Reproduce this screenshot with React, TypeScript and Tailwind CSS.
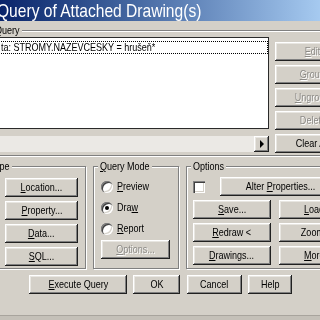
import clsx from 'clsx';
import type { ReactNode } from 'react';

const face = "font-['Liberation_Sans',Arial,sans-serif]";
const raised =
  'shadow-[inset_-1px_-1px_0_#202020,inset_1px_1px_0_#ffffff,inset_-2px_-2px_0_#808080,inset_2px_2px_0_#e8e6e1]';
const sunken =
  'shadow-[inset_1px_1px_0_#808080,inset_2px_2px_0_#404040,inset_-1px_-1px_0_#ffffff,inset_-2px_-2px_0_#d4d0c8]';
const etched = 'border border-[#808080] shadow-[1px_1px_0_#ffffff,inset_1px_1px_0_#ffffff]';

// the dialog font is narrower than Arial, so squeeze the glyphs
function N({ children, left }: { children: ReactNode; left?: boolean }) {
  return (
    <span className={clsx('inline-block whitespace-nowrap scale-x-[0.82]', left && 'origin-left')}>{children}</span>
  );
}

function U({ c }: { c: string }) {
  return <span className="underline underline-offset-[1px]">{c}</span>;
}

function Legend({ children, w, className }: { children: ReactNode; w: string; className?: string }) {
  return (
    <legend className={clsx('px-[2px] leading-[13px] bg-[#d4d0c8]', className)}>
      <span className={clsx('inline-block align-top', w)}>
        <N left>{children}</N>
      </span>
    </legend>
  );
}

function Btn({ children, className, disabled }: { children: ReactNode; className?: string; disabled?: boolean }) {
  return (
    <div
      className={clsx(
        'h-[19px] shrink-0 flex items-center justify-center bg-[#d4d0c8] leading-none',
        raised,
        disabled && 'text-[#8c8a86] [text-shadow:1px_1px_0_#ffffff]',
        className
      )}
    >
      <N>{children}</N>
    </div>
  );
}

function Radio({ label, checked }: { label: ReactNode; checked?: boolean }) {
  return (
    <div className="h-[21px] flex items-center gap-[4px] ml-[3px]">
      <span className={`w-[12px] h-[12px] rounded-full bg-white flex items-center justify-center ${sunken}`}>
        {checked && <span className="w-[4px] h-[4px] rounded-full bg-black" />}
      </span>
      <N left>{label}</N>
    </div>
  );
}

export default function App() {
  return (
    <div className={`w-[320px] h-[320px] overflow-hidden bg-[#d4d0c8] flex flex-col text-[11px] text-black ${face}`}>
      {/* title bar */}
      <div className="h-[21px] shrink-0 flex items-center overflow-hidden bg-gradient-to-r from-[#0a246a] to-[#a6caf0]">
        <span className="-ml-[3px] text-[19px] leading-[21px] text-white">
          <N left>Query of Attached Drawing(s)</N>
        </span>
      </div>

      <div className="-ml-[20px] w-[400px] flex flex-col">
        {/* Query group */}
        <fieldset className={`mt-[3px] px-[8px] pb-[2px] ${etched}`}>
          <Legend w="w-[25px]" className="ml-[4px]">
            Query
          </Legend>
          <div className="flex items-start gap-[6px]">
            <div className="w-[280px] flex flex-col">
              <div className="h-[92px] bg-white border border-[#2a2a2a] pt-[3px]">
                <div className="h-[13px] border border-dotted border-black pl-[10px] leading-[11px]">
                  <N left>ta: STROMY.NAZEVCESKY = hrušeň*</N>
                </div>
              </div>
              <div className="mt-[7px] h-[16px] bg-[#ebe9e5] flex justify-end">
                <div className={`w-[15px] h-[16px] bg-[#d4d0c8] flex items-center justify-center ${raised}`}>
                  <span className="w-0 h-0 border-y-[4px] border-y-transparent border-l-[4px] border-l-black" />
                </div>
              </div>
            </div>
            <div className="mt-[5px] flex flex-col gap-[4px]">
              <Btn className="w-[75px]" disabled>
                <U c="E" />dit
              </Btn>
              <Btn className="w-[75px]" disabled>
                <U c="G" />roup
              </Btn>
              <Btn className="w-[75px]" disabled>
                <U c="U" />ngroup
              </Btn>
              <Btn className="w-[75px]" disabled>
                Delete
              </Btn>
              <Btn className="w-[75px]">Clear All</Btn>
            </div>
          </div>
        </fieldset>

        {/* lower groups */}
        <div className="mt-[4px] flex gap-[7px]">
          <fieldset className={`w-[106px] px-[7px] pb-[2px] ${etched}`}>
            <Legend w="w-[20px]">Type</Legend>
            <div className="pt-[5px] flex flex-col items-end gap-[4px]">
              <Btn className="w-[73px]">
                <U c="L" />ocation...
              </Btn>
              <Btn className="w-[73px]">
                <U c="P" />roperty...
              </Btn>
              <Btn className="w-[73px]">
                <U c="D" />ata...
              </Btn>
              <Btn className="w-[73px]">
                <U c="S" />QL...
              </Btn>
            </div>
          </fieldset>

          <fieldset className={`w-[86px] pl-[4px] pb-[2px] ${etched}`}>
            <Legend w="w-[50px]">
              <U c="Q" />uery Mode
            </Legend>
            <div className="pt-[3px] flex flex-col">
              <Radio label={<><U c="P" />review</>} />
              <Radio label={<>Dra<U c="w" /></>} checked />
              <Radio label={<><U c="R" />eport</>} />
              <Btn className="mt-[1px] ml-[3px] w-[69px] h-[18px]" disabled>
                <U c="O" />ptions...
              </Btn>
            </div>
          </fieldset>

          <fieldset className={`w-[190px] pl-[4px] pb-[2px] ${etched}`}>
            <Legend w="w-[31px]">Options</Legend>
            <div className="pt-[4px] ml-[2px] flex flex-col gap-[4px]">
              <div className="flex items-center gap-[15px]">
                <span className={`w-[12px] h-[12px] bg-white ${sunken}`} />
                <Btn className="w-[121px]">
                  Alter <U c="P" />roperties...
                </Btn>
              </div>
              <div className="flex gap-[8px]">
                <Btn className="w-[78px]">
                  <U c="S" />ave...
                </Btn>
                <Btn className="w-[78px]">
                  <U c="L" />oad...
                </Btn>
              </div>
              <div className="flex gap-[8px]">
                <Btn className="w-[78px]">
                  <U c="R" />edraw &lt;
                </Btn>
                <Btn className="w-[78px]">Zoom All</Btn>
              </div>
              <div className="flex gap-[8px]">
                <Btn className="w-[78px]">
                  <U c="D" />rawings...
                </Btn>
                <Btn className="w-[78px]">
                  <U c="M" />ore...
                </Btn>
              </div>
            </div>
          </fieldset>
        </div>

        {/* dialog buttons */}
        <div className="mt-[6px] pl-[49px] flex">
          <Btn className="w-[98px]">
            <U c="E" />xecute Query
          </Btn>
          <Btn className="ml-[6px] w-[47px]">OK</Btn>
          <Btn className="ml-[7px] w-[55px]">Cancel</Btn>
          <Btn className="ml-[6px] w-[44px]">Help</Btn>
        </div>
      </div>

      <div className="mt-auto h-[5px] shrink-0 border-t border-[#a8a49d] bg-[#c4c0b8]" />
    </div>
  );
}
